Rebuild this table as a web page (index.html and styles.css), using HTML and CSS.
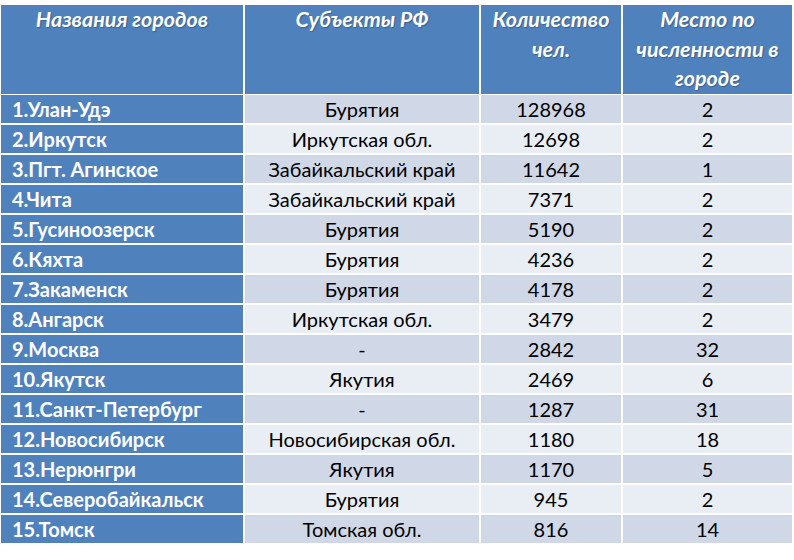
FILE: index.html
```html
<!DOCTYPE html>
<html lang="ru">
<head>
<meta charset="utf-8">
<title>Города</title>
<link rel="stylesheet" href="styles.css">
</head>
<body>
<div class="table">
  <div class="row head">
    <div class="cell">Названия городов</div>
    <div class="cell">Субъекты РФ</div>
    <div class="cell">Количество<br>чел.</div>
    <div class="cell">Место по<br>численности в<br>городе</div>
  </div>
  <div class="row odd"><div class="cell city">1.Улан-Удэ</div><div class="cell">Бурятия</div><div class="cell">128968</div><div class="cell">2</div></div>
  <div class="row even"><div class="cell city">2.Иркутск</div><div class="cell">Иркутская обл.</div><div class="cell">12698</div><div class="cell">2</div></div>
  <div class="row odd"><div class="cell city">3.Пгт. Агинское</div><div class="cell">Забайкальский край</div><div class="cell">11642</div><div class="cell">1</div></div>
  <div class="row even"><div class="cell city">4.Чита</div><div class="cell">Забайкальский край</div><div class="cell">7371</div><div class="cell">2</div></div>
  <div class="row odd"><div class="cell city">5.Гусиноозерск</div><div class="cell">Бурятия</div><div class="cell">5190</div><div class="cell">2</div></div>
  <div class="row even"><div class="cell city">6.Кяхта</div><div class="cell">Бурятия</div><div class="cell">4236</div><div class="cell">2</div></div>
  <div class="row odd"><div class="cell city">7.Закаменск</div><div class="cell">Бурятия</div><div class="cell">4178</div><div class="cell">2</div></div>
  <div class="row even"><div class="cell city">8.Ангарск</div><div class="cell">Иркутская обл.</div><div class="cell">3479</div><div class="cell">2</div></div>
  <div class="row odd"><div class="cell city">9.Москва</div><div class="cell">-</div><div class="cell">2842</div><div class="cell">32</div></div>
  <div class="row even"><div class="cell city">10.Якутск</div><div class="cell">Якутия</div><div class="cell">2469</div><div class="cell">6</div></div>
  <div class="row odd"><div class="cell city">11.Санкт-Петербург</div><div class="cell">-</div><div class="cell">1287</div><div class="cell">31</div></div>
  <div class="row even"><div class="cell city">12.Новосибирск</div><div class="cell">Новосибирская обл.</div><div class="cell">1180</div><div class="cell">18</div></div>
  <div class="row odd"><div class="cell city">13.Нерюнгри</div><div class="cell">Якутия</div><div class="cell">1170</div><div class="cell">5</div></div>
  <div class="row even"><div class="cell city">14.Северобайкальск</div><div class="cell">Бурятия</div><div class="cell">945</div><div class="cell">2</div></div>
  <div class="row odd"><div class="cell city">15.Томск</div><div class="cell">Томская обл.</div><div class="cell">816</div><div class="cell">14</div></div>
</div>
</body>
</html>
```
FILE: styles.css
```css
html, body {
  margin: 0;
  padding: 0;
  background: #ffffff;
}
.table {
  margin: 5px 0 0 1px;
  width: 791px;
  display: flex;
  flex-direction: column;
  gap: 2px;
  font-family: "Lato", "Liberation Sans", sans-serif;
}
.row {
  display: grid;
  grid-template-columns: 242px 234px 140px 169px;
  column-gap: 2px;
  height: 28px;
}
.cell {
  text-align: center;
  font-size: 20px;
  line-height: 28px;
  color: #000;
  white-space: nowrap;
}
.odd .cell { background: #d0d8e8; }
.even .cell { background: #e9edf4; }
.row .city {
  background: #4f81bd;
  color: #fff;
  font-weight: bold;
  text-align: left;
  padding-left: 11px;
}
.head {
  height: 84px;
  margin-bottom: 4px;
}
.head .cell {
  background: #4f81bd;
  color: #fff;
  font-weight: bold;
  font-style: italic;
  font-size: 21.5px;
  line-height: 29.5px;
  text-shadow: 1px 1px 1px rgba(0, 0, 0, 0.25);
}
```
